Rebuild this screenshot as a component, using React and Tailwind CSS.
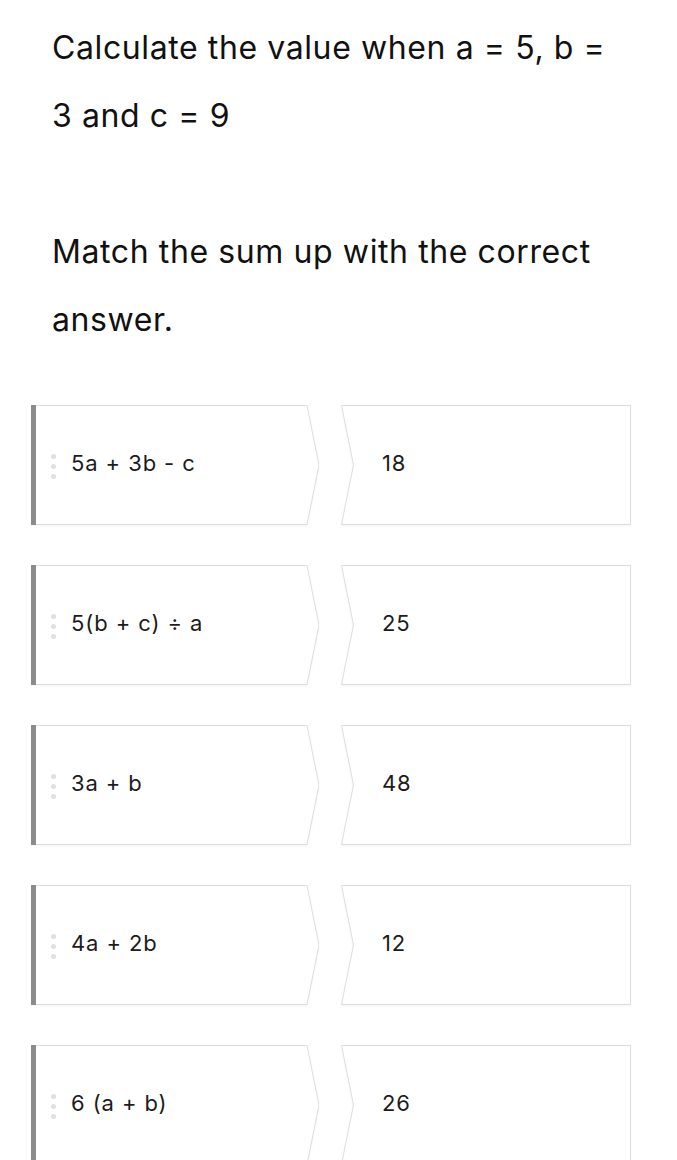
import React from 'react';

const pairs = [
  { sum: '5a + 3b - c', answer: '18' },
  { sum: '5(b + c) ÷ a', answer: '25' },
  { sum: '3a + b', answer: '48' },
  { sum: '4a + 2b', answer: '12' },
  { sum: '6 (a + b)', answer: '26' },
];

function GripDots() {
  return (
    <div className="flex flex-col gap-[5px] mr-[15px] mt-[3px]">
      <span className="block w-[5px] h-[5px] rounded-full bg-[#e0e0e0]" />
      <span className="block w-[5px] h-[5px] rounded-full bg-[#e0e0e0]" />
      <span className="block w-[5px] h-[5px] rounded-full bg-[#e0e0e0]" />
    </div>
  );
}

function SumCard({ text }) {
  return (
    <div className="relative w-[288px] h-[120px] flex items-center pl-[20px]">
      <svg className="absolute inset-0 drop-shadow-[0_1px_1px_rgba(0,0,0,0.04)]" width="288" height="120" viewBox="0 0 288 120">
        <path d="M0.5 0.5 H276 L288 60 L276 119.5 H0.5 Z" fill="#fff" stroke="#dddddd" strokeWidth="1" />
        <rect x="0" y="0" width="5" height="120" fill="#8c8c8c" />
      </svg>
      <div className="relative flex items-center">
        <GripDots />
        <span className="text-[22px] tracking-[0.9px] text-[#1c1c1c] pb-[3px]">{text}</span>
      </div>
    </div>
  );
}

function AnswerCard({ text }) {
  return (
    <div className="relative w-[290px] h-[120px] flex items-center pl-[41px]">
      <svg className="absolute inset-0 drop-shadow-[0_1px_1px_rgba(0,0,0,0.04)]" width="290" height="120" viewBox="0 0 290 120">
        <path d="M0.5 0.5 H289.5 V119.5 H0.5 L12.5 60 Z" fill="#fff" stroke="#dddddd" strokeWidth="1" />
      </svg>
      <span className="relative text-[22px] tracking-[0.9px] text-[#1c1c1c] pb-[3px]">{text}</span>
    </div>
  );
}

export default function App() {
  return (
    <div className="min-h-screen bg-white font-['Inter',sans-serif] text-[#111]">
      <div className="pt-[14px] pl-[52px] pr-[50px]">
        <p className="text-[32px] leading-[68px] tracking-[0.6px]">Calculate the value when a = 5, b = 3 and c = 9</p>
        <p className="mt-[68px] text-[32px] leading-[68px] tracking-[0.6px]">Match the sum up with the correct answer.</p>
      </div>
      <div className="mt-[51px] pl-[31px] flex flex-col gap-[40px]">
        {pairs.map((p) => (
          <div key={p.sum} className="flex gap-[22px]">
            <SumCard text={p.sum} />
            <AnswerCard text={p.answer} />
          </div>
        ))}
      </div>
    </div>
  );
}
